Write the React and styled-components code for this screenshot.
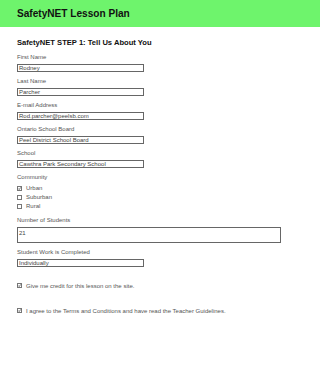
import React from "react";
import styled, { createGlobalStyle } from "styled-components";

const GlobalStyle = createGlobalStyle`
  html, body {
    margin: 0;
    padding: 0;
    background: #ffffff;
    font-family: "Liberation Sans", Arial, sans-serif;
  }
`;

const Header = styled.header`
  height: 27px;
  background: #6ef46c;
  display: flex;
  align-items: center;
  padding-left: 17px;
`;

const Title = styled.h1`
  margin: 0;
  font-size: 10.1px;
  font-weight: bold;
  color: #111;
`;

const Page = styled.main`
  padding: 11px 17px 0;
  display: flex;
  flex-direction: column;
`;

const Heading = styled.h2`
  margin: 0 0 5px;
  font-size: 7.6px;
  line-height: 10px;
  font-weight: bold;
  color: #111;
`;

const Field = styled.div`
  display: flex;
  flex-direction: column;
  margin-bottom: ${(p) => p.$gap ?? 5}px;
`;

const Label = styled.label`
  font-size: 6px;
  line-height: 8px;
  color: #555;
  margin-bottom: 3px;
`;

const TextBox = styled.div`
  box-sizing: border-box;
  width: ${(p) => (p.$wide ? 264 : 127)}px;
  height: ${(p) => (p.$tall ? 16 : 8)}px;
  border: 1px solid #666;
  padding: ${(p) => (p.$tall ? "2px 1px 0" : "0 1px")};
  font-size: 6px;
  line-height: 6px;
  color: #444;
  white-space: nowrap;
  overflow: hidden;
`;

const Options = styled.div`
  display: flex;
  flex-direction: column;
  margin-top: -0.5px;
`;

const CheckRow = styled.div`
  display: flex;
  align-items: center;
  gap: 4px;
  height: 9px;
  font-size: 6px;
  color: #555;
  margin-bottom: ${(p) => p.$gap ?? 0}px;
`;

const Box = styled.span`
  box-sizing: border-box;
  width: 5px;
  height: 5px;
  border: 1px solid #777;
  display: flex;
  align-items: center;
  justify-content: center;
  flex-shrink: 0;
`;

const Agreements = styled.div`
  margin-top: 14px;
  display: flex;
  flex-direction: column;
`;

function Check({ checked, children, gap }) {
  return (
    <CheckRow $gap={gap}>
      <Box>
        {checked && (
          <svg width="3" height="3" viewBox="0 0 10 10" style={{ overflow: "visible" }}>
            <path d="M0.5 5 L4 8.5 L9.5 1" fill="none" stroke="#333" strokeWidth="2.2" />
          </svg>
        )}
      </Box>
      <span>{children}</span>
    </CheckRow>
  );
}

export default function App() {
  return (
    <>
      <GlobalStyle />
      <Header>
        <Title>SafetyNET Lesson Plan</Title>
      </Header>
      <Page>
        <Heading>SafetyNET STEP 1: Tell Us About You</Heading>
        <Field>
          <Label>First Name</Label>
          <TextBox>Rodney</TextBox>
        </Field>
        <Field>
          <Label>Last Name</Label>
          <TextBox>Parcher</TextBox>
        </Field>
        <Field>
          <Label>E-mail Address</Label>
          <TextBox>Rod.parcher@peelsb.com</TextBox>
        </Field>
        <Field>
          <Label>Ontario School Board</Label>
          <TextBox>Peel District School Board</TextBox>
        </Field>
        <Field>
          <Label>School</Label>
          <TextBox>Cawthra Park Secondary School</TextBox>
        </Field>
        <Field $gap={5.5}>
          <Label>Community</Label>
          <Options>
            <Check checked>Urban</Check>
            <Check>Suburban</Check>
            <Check>Rural</Check>
          </Options>
        </Field>
        <Field>
          <Label>Number of Students</Label>
          <TextBox $wide $tall>21</TextBox>
        </Field>
        <Field $gap={0}>
          <Label>Student Work is Completed</Label>
          <TextBox>Individually</TextBox>
        </Field>
        <Agreements>
          <Check checked gap={16}>Give me credit for this lesson on the site.</Check>
          <Check checked>I agree to the Terms and Conditions and have read the Teacher Guidelines.</Check>
        </Agreements>
      </Page>
    </>
  );
}
